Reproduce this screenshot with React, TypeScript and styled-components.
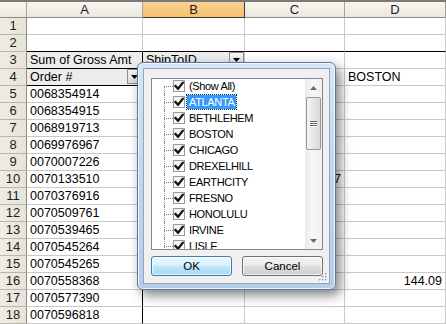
import styled, { createGlobalStyle } from "styled-components";

const GlobalStyle = createGlobalStyle`
  html, body {
    margin: 0;
    padding: 0;
  }
  body {
    width: 446px;
    height: 324px;
    overflow: hidden;
    background: #fff;
    font-family: "Liberation Sans", Arial, sans-serif;
  }
`;

const Sheet = styled.div`
  position: relative;
  width: 446px;
  height: 324px;
  overflow: hidden;
  box-sizing: border-box;
  border-top: 2px solid #7a7a7a;
`;

const Grid = styled.div`
  display: grid;
  grid-template-columns: 27px 116px 102px 100px 101px;
  grid-template-rows: 16px;
  grid-auto-rows: 17px;
`;

const ColHead = styled.div<{ $active?: boolean }>`
  box-sizing: border-box;
  border-right: 1px solid ${(p) => (p.$active ? "#3a3a3a" : "#a5a39a")};
  border-bottom: 1px solid ${(p) => (p.$active ? "#3a3a3a" : "#8d8b84")};
  background: ${(p) =>
    p.$active
      ? "linear-gradient(#fbd193, #f7bf6f)"
      : "linear-gradient(#f7f5ef, #ebe8de)"};
  display: flex;
  align-items: center;
  justify-content: center;
  font-size: 13px;
  color: #1e1e1e;
`;

const RowHead = styled.div`
  box-sizing: border-box;
  border-right: 1px solid #8d8b84;
  border-bottom: 1px solid #b9b6ac;
  background: linear-gradient(90deg, #efece4, #e6e3d8);
  display: flex;
  align-items: flex-end;
  justify-content: center;
  padding-bottom: 1px;
  font-size: 13px;
  line-height: 15px;
  color: #1e1e1e;
`;

const Cell = styled.div<{
  $right?: boolean;
  $shade?: boolean;
  $darkRight?: boolean;
  $darkBottom?: boolean;
}>`
  box-sizing: border-box;
  border-right: 1px solid ${(p) => (p.$darkRight ? "#000" : "#c9c9c9")};
  border-bottom: 1px solid ${(p) => (p.$darkBottom ? "#000" : "#c9c9c9")};
  background: ${(p) => (p.$shade ? "#ededed" : "#fff")};
  display: flex;
  align-items: flex-end;
  justify-content: ${(p) => (p.$right ? "flex-end" : "flex-start")};
  padding: 0 3px 1px 3px;
  font-size: 12.5px;
  line-height: 14px;
  color: #000;
  white-space: nowrap;
  overflow: hidden;
`;

const DropBtn = styled.div`
  box-sizing: border-box;
  width: 15px;
  height: 15px;
  margin: 0 -3px 0 auto;
  align-self: center;
  border: 1px solid #8e8e8e;
  background: linear-gradient(#f7f7f7, #dcdcdc);
  display: flex;
  align-items: center;
  justify-content: center;
  flex-shrink: 0;
`;

const Dialog = styled.div`
  position: absolute;
  left: 137px;
  top: 60px;
  width: 199px;
  height: 228px;
  box-sizing: border-box;
  padding: 5px;
  border: 1px solid #5b7898;
  border-radius: 6px;
  background: linear-gradient(180deg, #d6e6f6 0%, #c1d7ee 45%, #b5cde8 100%);
  box-shadow: 4px 5px 12px rgba(0, 0, 0, 0.5),
    inset 0 0 0 1px rgba(255, 255, 255, 0.75);
`;

const Client = styled.div`
  position: relative;
  box-sizing: border-box;
  height: 100%;
  background: #f0f0f0;
  border: 1px solid #8fa6bf;
  padding: 9px 6px 7px 7px;
  display: flex;
  flex-direction: column;
  gap: 6px;
`;

const ListBox = styled.div`
  box-sizing: border-box;
  height: 172px;
  border: 1px solid #828790;
  background: #fff;
  display: flex;
  overflow: hidden;
`;

const Items = styled.div`
  flex: 1;
  overflow: hidden;
  margin-top: -1px;
`;

const Item = styled.div<{ $first?: boolean }>`
  position: relative;
  height: 16px;
  display: flex;
  align-items: center;
  padding-left: 21px;
  font-family: "Liberation Sans", Arial, sans-serif;
  font-size: 11px;
  letter-spacing: -0.35px;
  color: #000;

  &::before {
    content: "";
    position: absolute;
    left: 12px;
    top: 8px;
    width: 9px;
    border-top: 1px dotted #8a8a8a;
  }

  &::after {
    content: "";
    position: absolute;
    left: 12px;
    top: ${(p) => (p.$first ? "8px" : "0")};
    bottom: 0;
    border-left: 1px dotted #8a8a8a;
  }
`;

const CheckBox = styled.div`
  box-sizing: border-box;
  width: 12px;
  height: 12px;
  border: 1px solid #9a9a9a;
  background: linear-gradient(135deg, #f2f2f2, #ffffff);
  display: flex;
  align-items: center;
  justify-content: center;
  flex-shrink: 0;
`;

const Label = styled.span<{ $selected?: boolean }>`
  margin-left: 2px;
  padding: 1px 2px;
  line-height: 12px;
  white-space: nowrap;
  background: ${(p) => (p.$selected ? "#3399ff" : "transparent")};
  color: ${(p) => (p.$selected ? "#fff" : "#000")};
  outline: ${(p) => (p.$selected ? "1px dotted #0b2a55" : "none")};
`;

const ScrollBar = styled.div`
  width: 17px;
  display: flex;
  flex-direction: column;
  background: linear-gradient(90deg, #e9e9e9, #f7f7f7 40%, #f0f0f0);
`;

const Arrow = styled.div`
  height: 17px;
  display: flex;
  align-items: center;
  justify-content: center;
`;

const Track = styled.div`
  flex: 1;
  padding: 1px 1px 0 1px;
`;

const Thumb = styled.div`
  box-sizing: border-box;
  height: 53px;
  border: 1px solid #979797;
  border-radius: 2px;
  background: linear-gradient(90deg, #f4f4f4, #e6e6e6 50%, #d8d8d8);
  display: flex;
  flex-direction: column;
  align-items: center;
  justify-content: center;
  gap: 1px;
`;

const Grip = styled.div`
  width: 7px;
  height: 1px;
  background: #666;
  box-shadow: 0 1px 0 #fff;
`;

const ButtonRow = styled.div`
  display: flex;
  gap: 10px;
  height: 20px;
`;

const Button = styled.div<{ $default?: boolean }>`
  flex: 1;
  box-sizing: border-box;
  border: 1px solid ${(p) => (p.$default ? "#3c7fb1" : "#707070")};
  border-radius: 3px;
  background: ${(p) =>
    p.$default
      ? "linear-gradient(#eaf6fd 0%, #d9f0fc 50%, #bee6fd 51%, #a7d9f5 100%)"
      : "linear-gradient(#f2f2f2 0%, #ebebeb 50%, #dddddd 51%, #cfcfcf 100%)"};
  box-shadow: inset 0 0 0 1px rgba(255, 255, 255, 0.7);
  display: flex;
  align-items: center;
  justify-content: center;
  font-size: 11.5px;
  color: #000;
`;

const ResizeGrip = styled.svg`
  position: absolute;
  right: 1px;
  bottom: 1px;
`;

const columns = ["A", "B", "C", "D"];

const orders = [
  "0068354914",
  "0068354915",
  "0068919713",
  "0069976967",
  "0070007226",
  "0070133510",
  "0070376916",
  "0070509761",
  "0070539465",
  "0070545264",
  "0070545265",
  "0070558368",
  "0070577390",
  "0070596818",
];

const cities = [
  "(Show All)",
  "ATLANTA",
  "BETHLEHEM",
  "BOSTON",
  "CHICAGO",
  "DREXELHILL",
  "EARTHCITY",
  "FRESNO",
  "HONOLULU",
  "IRVINE",
  "LISLE",
];

function DownTriangle() {
  return (
    <svg width="7" height="4" viewBox="0 0 7 4">
      <path d="M0 0 H7 L3.5 4 Z" fill="#000" />
    </svg>
  );
}

function Check() {
  return (
    <svg width="10" height="10" viewBox="0 0 10 10">
      <path
        d="M1.5 5 L4 7.8 L8.8 1.8"
        fill="none"
        stroke="#111"
        strokeWidth="2.2"
        strokeLinecap="square"
      />
    </svg>
  );
}

function ScrollArrow({ up }: { up?: boolean }) {
  return (
    <svg width="7" height="4" viewBox="0 0 7 4">
      <path d={up ? "M0 4 H7 L3.5 0 Z" : "M0 0 H7 L3.5 4 Z"} fill="#6a6a6a" />
    </svg>
  );
}

function AutoFilterDialog() {
  return (
    <Dialog>
      <Client>
        <ListBox>
          <Items>
            {cities.map((city, i) => (
              <Item key={city} $first={i === 0}>
                <CheckBox>
                  <Check />
                </CheckBox>
                <Label $selected={city === "ATLANTA"}>{city}</Label>
              </Item>
            ))}
          </Items>
          <ScrollBar>
            <Arrow>
              <ScrollArrow up />
            </Arrow>
            <Track>
              <Thumb>
                <Grip />
                <Grip />
                <Grip />
              </Thumb>
            </Track>
            <Arrow>
              <ScrollArrow />
            </Arrow>
          </ScrollBar>
        </ListBox>
        <ButtonRow>
          <Button $default>OK</Button>
          <Button>Cancel</Button>
        </ButtonRow>
        <ResizeGrip width="10" height="10" viewBox="0 0 10 10">
          {[
            [8, 2],
            [8, 5],
            [5, 5],
            [8, 8],
            [5, 8],
            [2, 8],
          ].map(([x, y]) => (
            <g key={`${x}-${y}`}>
              <rect x={x} y={y} width="1.5" height="1.5" fill="#fff" />
              <rect x={x - 1} y={y - 1} width="1.5" height="1.5" fill="#8a9bb0" />
            </g>
          ))}
        </ResizeGrip>
      </Client>
    </Dialog>
  );
}

export default function App() {
  return (
    <>
      <GlobalStyle />
      <Sheet>
        <Grid>
          <ColHead />
          {columns.map((c) => (
            <ColHead key={c} $active={c === "B"}>
              {c}
            </ColHead>
          ))}

          <RowHead>1</RowHead>
          <Cell />
          <Cell />
          <Cell />
          <Cell />

          <RowHead>2</RowHead>
          <Cell $darkBottom />
          <Cell $darkBottom />
          <Cell $darkBottom />
          <Cell $darkBottom />

          <RowHead>3</RowHead>
          <Cell $shade $darkRight $darkBottom>
            Sum of Gross Amt
          </Cell>
          <Cell $shade>
            ShipToID
            <DropBtn>
              <DownTriangle />
            </DropBtn>
          </Cell>
          <Cell />
          <Cell />

          <RowHead>4</RowHead>
          <Cell $shade $darkRight $darkBottom>
            Order #
            <DropBtn>
              <DownTriangle />
            </DropBtn>
          </Cell>
          <Cell>ATLANTA</Cell>
          <Cell>BETHLEHEM</Cell>
          <Cell>BOSTON</Cell>

          {orders.map((order, i) => {
            const row = i + 5;
            return [
              <RowHead key={`h${row}`}>{row}</RowHead>,
              <Cell key={`a${row}`} $darkRight>
                {order}
              </Cell>,
              <Cell key={`b${row}`} $right />,
              <Cell key={`c${row}`} $right>
                {row === 10 ? "47" : ""}
              </Cell>,
              <Cell key={`d${row}`} $right>
                {row === 16 ? "144.09" : ""}
              </Cell>,
            ];
          })}
        </Grid>
        <AutoFilterDialog />
      </Sheet>
    </>
  );
}
